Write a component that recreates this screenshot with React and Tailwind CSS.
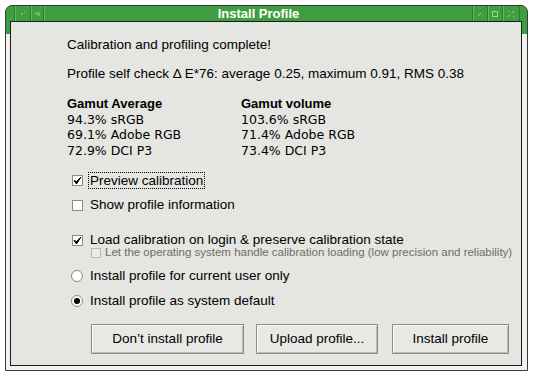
import React from "react";

const sans = "font-['Liberation_Sans',Arial,sans-serif]";
const deja = "font-['DejaVu_Sans',sans-serif]";

function Check({ checked = false, small = false, disabled = false }) {
  const size = small ? "w-[10px] h-[10px]" : "w-[11px] h-[11px]";
  return (
    <span
      className={`${size} shrink-0 flex items-center justify-center border ${
        disabled ? "border-[#b8b8b4] bg-[#ecece8]" : "border-[#8a8a86] bg-white"
      }`}
    >
      {checked && (
        <svg width="9" height="9" viewBox="0 0 9 9">
          <path d="M1 4.5 L3.5 8 L8 1 L3.5 5.5 Z" fill="#000" stroke="#000" strokeWidth="1" strokeLinejoin="round" />
        </svg>
      )}
    </span>
  );
}

function Radio({ selected = false }) {
  return (
    <span className="w-[12px] h-[12px] shrink-0 rounded-full border border-[#8a8a86] bg-white flex items-center justify-center">
      {selected && <span className="w-[6px] h-[6px] rounded-full bg-black" />}
    </span>
  );
}

function TitleButton({ children, w = "w-[15px]" }) {
  return (
    <span className={`h-full ${w} flex items-center justify-center border-l border-[#2d7a2d] shadow-[inset_1px_0_0_#62bd62]`}>
      <svg width="10" height="10" viewBox="0 0 10 10" fill="none" stroke="#93d893" strokeWidth="1">
        {children}
      </svg>
    </span>
  );
}

function Button({ children, w }) {
  return (
    <button
      className={`${w} h-[30px] bg-[#e8e8e4] border border-[#8c8c88] shadow-[inset_1px_1px_0_#fafaf8,inset_-1px_-1px_0_#b8b8b4] text-[13.5px] text-black ${sans}`}
    >
      {children}
    </button>
  );
}

export default function App() {
  return (
    <div className="w-[533px] h-[376px] bg-white pt-[5px] pl-[5px]">
      <div className="w-[523px] h-[366px] flex flex-col border border-[#3a3a3a] rounded-t-[7px] overflow-hidden bg-[linear-gradient(#3f9e3f_0_28px,#f2f2f0_28px)] pl-[4px] pr-[5px] pb-[4px]">
        {/* title bar */}
        <div className="h-[15px] -ml-[4px] -mr-[5px] flex items-center bg-[#3f9e3f]">
          <div className="flex h-full ml-[8px]">
            <TitleButton w="w-[16px]">
              <path d="M3 6 L5 4 M6 3 L7 3" />
            </TitleButton>
            <TitleButton w="w-[13px]">
              <path d="M3 5 L7 5 M7 3 L7 7 M4 3 L5 4" />
            </TitleButton>
            <span className="h-full border-l border-[#2d7a2d] shadow-[inset_1px_0_0_#62bd62] w-[2px]" />
          </div>
          <div className={`flex-1 text-center text-white font-bold text-[13px] leading-[15px] ${sans}`}>
            Install Profile
          </div>
          <div className="flex h-full mr-[7px]">
            <TitleButton>
              <path d="M3 7 L6 4 M7 7 L7.5 7" />
            </TitleButton>
            <TitleButton>
              <rect x="2.5" y="2.5" width="5" height="5" />
            </TitleButton>
            <TitleButton w="w-[17px]">
              <path d="M2 8 L4 6 M6 4 L8 2 M2 2 L3 3 M7 7 L8 8" />
            </TitleButton>
            <span className="h-full border-l border-[#2d7a2d] w-[1px]" />
          </div>
        </div>

        {/* content */}
        <div className="flex-1 bg-[#e5e5e1] border border-[#1c1c1c] pl-[56px] pt-[15px] flex flex-col text-black">
          <p className={`${sans} text-[13.5px] leading-[16px]`}>Calibration and profiling complete!</p>
          <p className={`${sans} text-[13.5px] leading-[16px] mt-[13px]`}>
            Profile self check Δ E*76: average 0.25, maximum 0.91, RMS 0.38
          </p>

          <div className={`${deja} text-[12.5px] leading-[15.5px] mt-[14px] grid grid-cols-[174px_1fr]`}>
            <div className={`${sans} font-bold text-[13px]`}>Gamut Average</div>
            <div className={`${sans} font-bold text-[13px]`}>Gamut volume</div>
            <div>94.3% sRGB</div>
            <div>103.6% sRGB</div>
            <div>69.1% Adobe RGB</div>
            <div>71.4% Adobe RGB</div>
            <div>72.9% DCI P3</div>
            <div>73.4% DCI P3</div>
          </div>

          <div className={`${sans} text-[13.5px] flex flex-col`}>
            <label className="h-[18px] mt-[13px] ml-[5px] flex items-center gap-[5px]">
              <Check checked />
              <span className="border border-dotted border-black px-[1px] leading-[15px]">Preview calibration</span>
            </label>
            <label className="h-[18px] mt-[7px] ml-[5px] flex items-center gap-[7px]">
              <Check />
              <span>Show profile information</span>
            </label>
            <label className="h-[14px] mt-[19px] ml-[5px] flex items-center gap-[7px]">
              <Check checked />
              <span>Load calibration on login &amp; preserve calibration state</span>
            </label>
            <label className="h-[12px] ml-[24px] flex items-center gap-[4px] text-[11.5px] text-[#6e6e6a]">
              <Check small disabled />
              <span>Let the operating system handle calibration loading (low precision and reliability)</span>
            </label>
            <label className="h-[18px] mt-[8px] ml-[4px] flex items-center gap-[7px]">
              <Radio />
              <span>Install profile for current user only</span>
            </label>
            <label className="h-[18px] mt-[7px] ml-[4px] flex items-center gap-[7px]">
              <Radio selected />
              <span>Install profile as system default</span>
            </label>
          </div>

          <div className="flex mt-[14px] ml-[24px] gap-[12px]">
            <Button w="w-[153px]">Don’t install profile</Button>
            <Button w="w-[122px]">Upload profile...</Button>
            <Button w="w-[117px] ml-[2px]">Install profile</Button>
          </div>
        </div>
      </div>
    </div>
  );
}
